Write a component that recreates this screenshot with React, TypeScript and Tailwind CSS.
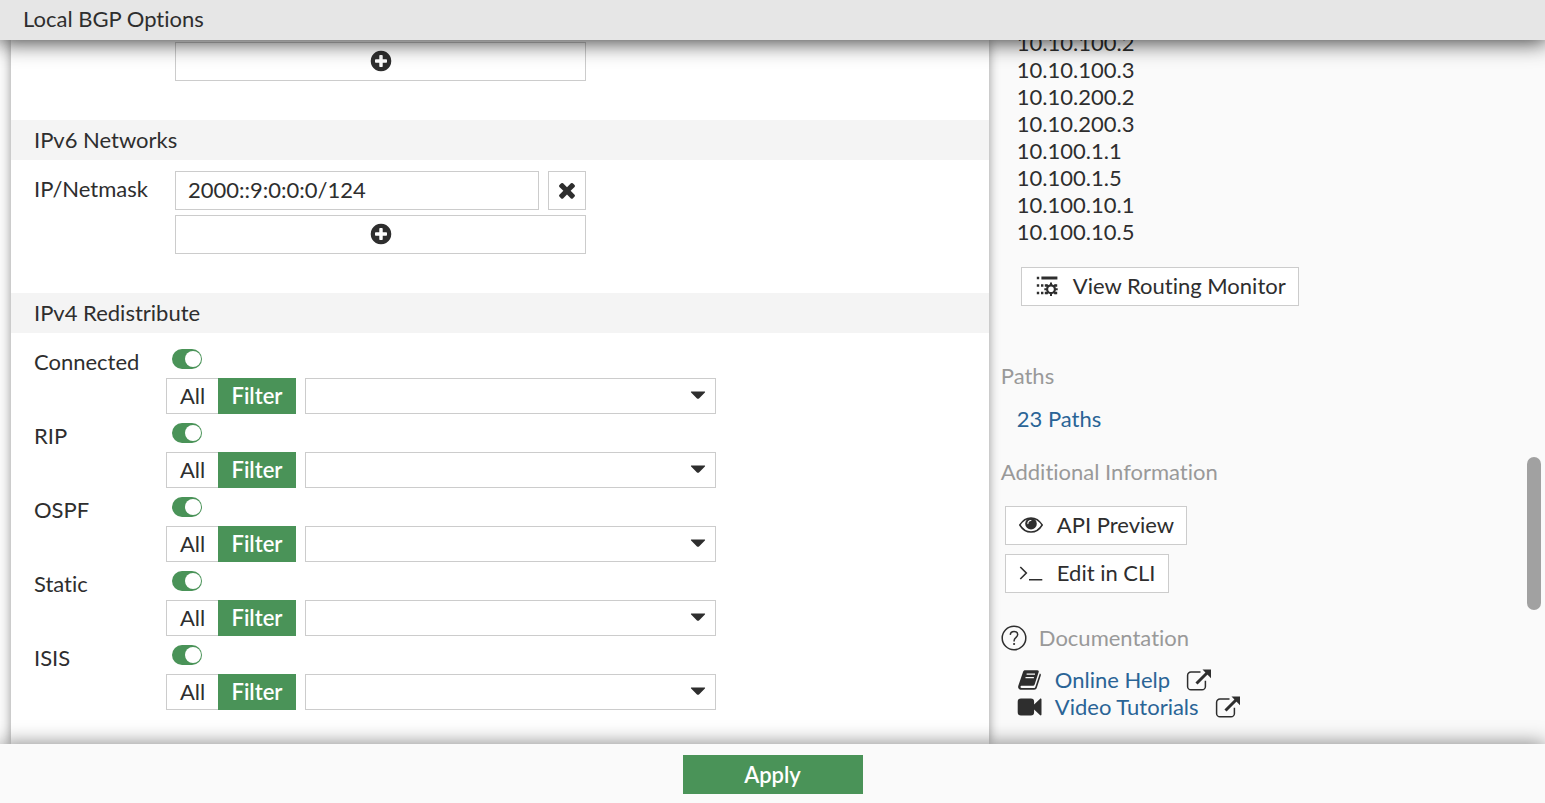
import React from 'react'

const neighbors = [
  '10.10.100.2',
  '10.10.100.3',
  '10.10.200.2',
  '10.10.200.3',
  '10.100.1.1',
  '10.100.1.5',
  '10.100.10.1',
  '10.100.10.5',
]

const protocols = ['Connected', 'RIP', 'OSPF', 'Static', 'ISIS']

function PlusCircleIcon() {
  return (
    <svg className="size-6" viewBox="0 0 1792 1792" fill="currentColor" aria-hidden="true">
      <path d="M1344 960v-128q0-26-19-45t-45-19h-256v-256q0-26-19-45t-45-19h-128q-26 0-45 19t-19 45v256h-256q-26 0-45 19t-19 45v128q0 26 19 45t45 19h256v256q0 26 19 45t45 19h128q26 0 45-19t19-45v-256h256q26 0 45-19t19-45zm320-64q0 209-103 385.5t-279.5 279.5-385.5 103-385.5-103-279.5-279.5-103-385.5 103-385.5 279.5-279.5 385.5-103 385.5 103 279.5 279.5 103 385.5z" />
    </svg>
  )
}

function TimesIcon() {
  return (
    <svg className="size-6" viewBox="0 0 1792 1792" fill="currentColor" aria-hidden="true">
      <path d="M1490 1322q0 40-28 68l-136 136q-28 28-68 28t-68-28l-294-294-294 294q-28 28-68 28t-68-28l-136-136q-28-28-28-68t28-68l294-294-294-294q-28-28-28-68t28-68l136-136q28-28 68-28t68 28l294 294 294-294q28-28 68-28t68 28l136 136q28 28 28 68t-28 68l-294 294 294 294q28 28 28 68z" />
    </svg>
  )
}

function RoutingIcon() {
  return (
    <svg className="h-5 w-[22px]" viewBox="0 0 22 20" fill="currentColor" aria-hidden="true">
      <path d="M0.8 0.8h2.4v2.4H0.8zM5.4 0.4h16v3h-16zM0.8 8.3h2.4v2.4H0.8zM5 8.3h2.4v2.4H5zM8.8 8.3h2.4v2.4h-2.4zM0.8 15.8h2.4v2.4H0.8zM5 15.8h2.4v2.4H5zM18.8 8.3h2.4v2.4h-2.4zM18.8 15.8h2.4v2.4h-2.4zM8.8 15.8h2.4v2.4h-2.4z" />
      <circle cx="15" cy="13.3" r="3.9" fill="none" stroke="currentColor" strokeWidth="2.2" />
      <path
        d="M15 6.6v2.6M15 17.4v2.6M8.3 13.3h2.6M19.1 13.3h2.6M10.4 8.7l1.8 1.8M17.8 16.1l1.8 1.8M19.6 8.7l-1.8 1.8M12.2 16.1l-1.8 1.8"
        fill="none"
        stroke="currentColor"
        strokeWidth="2"
      />
    </svg>
  )
}

function EyeIcon() {
  return (
    <svg className="h-4 w-6" viewBox="0 0 24 16" aria-hidden="true">
      <path d="M0.8 8C3.6 3.4 7.4 0.9 12 0.9S20.4 3.4 23.2 8C20.4 12.6 16.6 15.1 12 15.1S3.6 12.6 0.8 8z" fill="none" stroke="currentColor" strokeWidth="1.5" />
      <circle cx="12" cy="6.7" r="5.8" fill="currentColor" />
      <path d="M8.9 6.6c0-1.8 1.2-3.1 3-3.1" fill="none" stroke="#fff" strokeWidth="1.1" strokeLinecap="round" />
    </svg>
  )
}

function TerminalIcon() {
  return (
    <svg className="h-4 w-6" viewBox="0 0 24 16" fill="none" stroke="currentColor" strokeWidth="1.6" aria-hidden="true">
      <path d="M1.3 2l6 6-6 6M10 14.8h13.3" />
    </svg>
  )
}

function QuestionIcon() {
  return (
    <svg className="size-[26px]" viewBox="0 0 26 26" fill="none" stroke="currentColor" strokeWidth="1.5" aria-hidden="true">
      <circle cx="13" cy="13" r="11.8" />
      <path d="M9.3 9.9c.1-2.2 1.6-3.5 3.8-3.5 2.1 0 3.6 1.3 3.6 3.2 0 1.5-.8 2.2-1.9 3.1-1.2.9-1.7 1.6-1.7 3.1v.7" />
      <circle cx="13.1" cy="19" r="1.1" fill="currentColor" stroke="none" />
    </svg>
  )
}

function BookIcon() {
  return (
    <svg className="h-[22px] w-[25px]" viewBox="0 0 25 22" aria-hidden="true">
      <path d="M8.2 1.2h12.1c1.200 0 1.700.8 1.400 1.800l-4 12.300c-.3 1-1.100 1.500-2.200 1.500H4.800c-1.500 0-1.900 2.200-.2 2.200h12.300c.8 0 1.300-.4 1.500-1.200L22.800 4.400c.9.3 1.300 1 1 2l-3.900 12.200c-.4 1.400-1.400 2.200-2.800 2.200H4.200c-2.200 0-3.600-2-2.900-4L6 3c.3-1.200 1.100-1.800 2.200-1.800z" fill="currentColor" />
      <path d="M9.600 5.200h8.400M8.500 8.600h8.400" stroke="#fafafa" strokeWidth="1.300" />
    </svg>
  )
}

function VideoIcon() {
  return (
    <svg className="h-5 w-[25px]" viewBox="0 0 24 20" fill="currentColor" aria-hidden="true">
      <path d="M3.5 1.5h9.800a3.300 3.300 0 0 1 3.300 3.300v2.700l5.800-5.600c.6-.6 1.600-.2 1.600.6v15c0 .8-1 1.200-1.600.6l-5.800-5.600v2.700a3.300 3.300 0 0 1-3.300 3.300H3.500A3.300 3.300 0 0 1 .2 15.200V4.800A3.300 3.300 0 0 1 3.500 1.500z" />
    </svg>
  )
}

function ExternalIcon() {
  return (
    <svg className="h-[22px] w-[26px]" viewBox="0 0 26 22" aria-hidden="true">
      <path d="M14.5 3H5a3.400 3.400 0 0 0-3.400 3.400v11A3.400 3.400 0 0 0 5 20.800h11a3.400 3.400 0 0 0 3.400-3.400v-5.600" fill="none" stroke="currentColor" strokeWidth="1.5" />
      <path d="M10.5 14.5L21 4" stroke="currentColor" strokeWidth="3" />
      <path d="M16.500.6H25v8.600z" fill="currentColor" />
    </svg>
  )
}

function AddButton({ label }: { label: string }) {
  return (
    <button type="button" aria-label={label} className="flex h-[39px] w-[411px] items-center justify-center border border-[#ccc] bg-white pb-0.5">
      <PlusCircleIcon />
    </button>
  )
}

function SectionTitle({ children }: { children: React.ReactNode }) {
  return <h2 className="flex h-10 items-center bg-[#f4f4f4] pb-0.5 pl-[23px]">{children}</h2>
}

function RedistributeRow({ name }: { name: string }) {
  const id = name.toLowerCase()
  return (
    <div className="flex h-[74px] pl-[23px]">
      <label htmlFor={id} className="w-[132px] pt-[7px]">{name}</label>
      <div>
        <input
          id={id}
          type="checkbox"
          defaultChecked
          className="ml-1.5 mt-2 block h-5 w-[30px] appearance-none rounded-full bg-[#4a9358] pl-[13px] pt-0.5 before:block before:size-4 before:rounded-full before:bg-white"
        />
        <div className="mt-[9px] flex">
          <div className="mr-[9px] flex h-9">
            <button type="button" className="w-[52px] border border-r-0 border-[#ccc] bg-white pb-0.5">All</button>
            <button type="button" className="w-[78px] bg-[#4a9358] pb-0.5 font-semibold text-white">Filter</button>
          </div>
          <div className="relative">
            <select aria-label={`${name} filter`} className="block h-9 w-[411px] appearance-none border border-[#ccc] bg-white px-3" />
            <svg className="pointer-events-none absolute right-2.5 top-3 h-2.5 w-4" viewBox="0 0 16 10" fill="currentColor" aria-hidden="true">
              <path d="M1.600 1.400h12.800c.7 0 .9.600.500 1L9 8.400c-.600.600-1.400.600-2 0L1.100 2.400c-.4-.4-.2-1 .5-1z" />
            </svg>
          </div>
        </div>
      </div>
    </div>
  )
}

function SideButton({ icon, children }: { icon: React.ReactNode; children: React.ReactNode }) {
  return (
    <button type="button" className="flex h-[39px] items-center gap-[13px] border border-[#ccc] bg-white px-3 pb-0.5">
      <span className="flex w-[26px] justify-center">{icon}</span>
      {children}
    </button>
  )
}

function DocLink({ icon, children }: { icon: React.ReactNode; children: React.ReactNode }) {
  return (
    <li className="flex items-center">
      {icon}
      <a href="#" className="ml-[13px] mr-4 text-[#2a6496]">{children}</a>
      <ExternalIcon />
    </li>
  )
}

export default function App() {
  return (
    <div className="flex h-screen flex-col overflow-hidden bg-[#fafafa] font-['Lato',sans-serif] text-[22px] leading-[27px] text-[#2e2e2e] [font-variant-ligatures:none]">
      <header className="z-10 flex h-10 shrink-0 items-center bg-[#e6e6e6] pb-[3px] pl-[23px] shadow-[0_0_22px_2px_rgba(0,0,0,0.8)]">
        <h1>Local BGP Options</h1>
      </header>

      <div className="relative flex min-h-0 flex-1">
        <main className="ml-[11px] min-w-0 flex-1 bg-white pt-0.5 shadow-[0_0_10px_rgba(0,0,0,0.4)]">
          <div className="pb-[39px] pl-[164px]">
            <AddButton label="Add IPv4 network" />
          </div>

          <SectionTitle>IPv6 Networks</SectionTitle>
          <div className="flex pb-[39px] pl-[23px] pt-[11px]">
            <label htmlFor="netmask" className="w-[141px] pt-1">IP/Netmask</label>
            <div className="flex flex-col gap-[5px]">
              <div className="flex gap-[9px]">
                <input id="netmask" type="text" defaultValue="2000::9:0:0:0/124" className="h-[39px] w-[364px] border border-[#ccc] bg-white px-3 pb-0.5" />
                <button type="button" aria-label="Remove network" className="flex h-[39px] w-[38px] items-center justify-center border border-[#ccc] bg-white pb-0.5">
                  <TimesIcon />
                </button>
              </div>
              <AddButton label="Add IPv6 network" />
            </div>
          </div>

          <SectionTitle>IPv4 Redistribute</SectionTitle>
          <div className="pt-2">
            {protocols.map((name) => (
              <RedistributeRow key={name} name={name} />
            ))}
          </div>
        </main>

        <aside className="w-[36%] overflow-hidden pl-3">
          <ul className="-mt-[11px] pl-4">
            {neighbors.map((ip) => (
              <li key={ip}>{ip}</li>
            ))}
          </ul>
          <div className="mt-[22px] flex pl-5">
            <SideButton icon={<RoutingIcon />}>View Routing Monitor</SideButton>
          </div>

          <h3 className="mt-14 text-[#999]">Paths</h3>
          <a href="#" className="ml-4 mt-4 block w-fit text-[#2a6496]">23 Paths</a>

          <h3 className="mt-[26px] text-[#999]">Additional Information</h3>
          <div className="mt-[21px] flex flex-col items-start gap-[9px] pl-1">
            <SideButton icon={<EyeIcon />}>API Preview</SideButton>
            <SideButton icon={<TerminalIcon />}>Edit in CLI</SideButton>
          </div>

          <h3 className="mt-[31px] flex items-center gap-3 text-[#999]">
            <span className="text-[#2e2e2e]"><QuestionIcon /></span>
            Documentation
          </h3>
          <ul className="mt-[15px] pl-4">
            <DocLink icon={<BookIcon />}>Online Help</DocLink>
            <DocLink icon={<VideoIcon />}>Video Tutorials</DocLink>
          </ul>
        </aside>

        {/* overlay scrollbar thumb */}
        <div className="absolute right-1 top-[417px] h-[153px] w-3.5 rounded-full bg-[#a1a1a1]" />
      </div>

      <footer className="z-10 flex h-[59px] shrink-0 items-start justify-center bg-[#fafafa] pt-[11px] shadow-[0_0_20px_rgba(0,0,0,0.5)]">
        <button type="button" className="h-[39px] w-[180px] bg-[#4a9358] font-semibold text-white">Apply</button>
      </footer>
    </div>
  )
}
